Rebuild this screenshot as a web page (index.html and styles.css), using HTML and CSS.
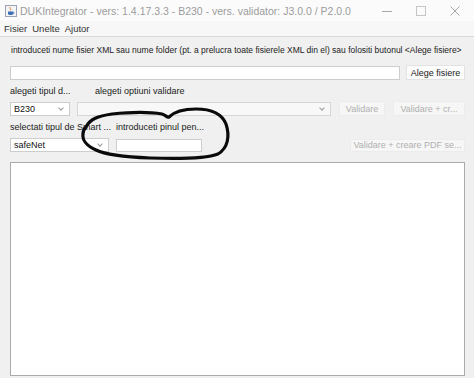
FILE: index.html
```html
<!DOCTYPE html>
<html lang="ro">
<head>
<meta charset="UTF-8">
<meta name="viewport" content="width=device-width, initial-scale=1.0">
<title>DUKIntegrator</title>
<link rel="stylesheet" href="styles.css">
</head>
<body>
  <div class="window">
    <!-- bara de titlu -->
    <div class="titlebar">
      <svg class="app-icon" width="12" height="12" viewBox="0 0 12 12">
        <rect x="0.5" y="0.5" width="11" height="11" fill="#f4f4f4" stroke="#9aa4b4"/>
        <path d="M5 2 C4 3.5 6.5 4 5.5 5.5" stroke="#e07a2a" fill="none" stroke-width="0.9"/>
        <path d="M3 6.5 H8 V8.5 C8 9.5 7 10 5.5 10 C4 10 3 9.5 3 8.5 Z" fill="#3b6fb6"/>
        <path d="M8 7 C9.5 7 9.5 9 8 9" stroke="#3b6fb6" fill="none" stroke-width="0.8"/>
      </svg>
      <span class="title">DUKIntegrator - vers: 1.4.17.3.3 - B230 - vers. validator: J3.0.0 / P2.0.0</span>
      <div class="win-controls">
        <svg class="ctl ctl-min" width="12" height="12" viewBox="0 0 12 12"><line x1="1" y1="6.5" x2="11" y2="6.5" stroke="#a8a8a8"/></svg>
        <svg class="ctl ctl-max" width="12" height="12" viewBox="0 0 12 12"><rect x="1.5" y="1.5" width="9" height="9" fill="none" stroke="#c4c4c4"/></svg>
        <svg class="ctl ctl-close" width="12" height="12" viewBox="0 0 12 12"><path d="M1.5 1.5 L10.5 10.5 M10.5 1.5 L1.5 10.5" stroke="#a8a8a8"/></svg>
      </div>
    </div>

    <!-- meniu -->
    <div class="menubar">
      <span class="menu-item">Fisier</span>
      <span class="menu-item">Unelte</span>
      <span class="menu-item">Ajutor</span>
    </div>

    <div class="content">
      <div class="label label-main">introduceti nume fisier XML sau nume folder (pt. a prelucra toate fisierele XML din el) sau folositi butonul &lt;Alege fisiere&gt;</div>

      <div class="row row-file">
        <div class="field field-path"></div>
        <div class="btn btn-choose">Alege fisiere</div>
      </div>

      <div class="row row-labels">
        <div class="label label-type">alegeti tipul d...</div>
        <div class="label label-options">alegeti optiuni validare</div>
      </div>

      <div class="row row-validate">
        <div class="combo combo-type">B230<span class="arrow"></span></div>
        <div class="combo combo-options disabled"><span class="arrow"></span></div>
        <div class="btn disabled btn-validate">Validare</div>
        <div class="btn disabled btn-validate-pdf">Validare + cr...</div>
      </div>

      <div class="row row-labels">
        <div class="label label-card">selectati tipul de Smart ...</div>
        <div class="label label-pin">introduceti pinul pen...</div>
      </div>

      <div class="row row-sign">
        <div class="combo combo-card">safeNet<span class="arrow"></span></div>
        <div class="field field-pin"></div>
        <div class="btn disabled btn-sign">Validare + creare PDF se...</div>
      </div>

      <div class="output"></div>
    </div>

    <!-- cerc desenat de mana peste formular -->
    <svg class="scribble" width="474" height="378" viewBox="0 0 474 378">
      <path d="M86 127 C90 119 98 116 112 114 C132 112 150 112 162 114 C166 115 167 118 169 117 C173 113 180 109 196 109 C212 109 222 114 226 124 C230 136 228 148 218 154 C205 159 180 159 150 158 C125 157 106 155 96 150 C87 146 82 140 83 134 C83 131 84 129 86 127"
            fill="none" stroke="#0a0a0a" stroke-width="3.2" stroke-linecap="round" stroke-linejoin="round"/>
    </svg>
  </div>
</body>
</html>
```

FILE: styles.css
```css
body {
  margin: 0;
  font-family: "Liberation Sans", Arial, sans-serif;
}

.window {
  position: relative;
  width: 474px;
  height: 378px;
  background: #f0f0f0;
  overflow: hidden;
}

.titlebar {
  display: flex;
  align-items: center;
  height: 21px;
  background: #fbfbfb;
  padding-left: 5px;
}

.app-icon {
  flex: none;
}

.title {
  margin-left: 3px;
  font-size: 10.5px;
  color: #9c9c9c;
  white-space: nowrap;
}

.win-controls {
  display: flex;
  align-items: center;
  margin-left: auto;
  gap: 22px;
  padding-right: 13px;
}

.menubar {
  display: flex;
  align-items: center;
  gap: 5px;
  height: 15px;
  padding-left: 4px;
  background: #f7f7f7;
  border-bottom: 1px solid #d9d9d9;
  font-size: 9.5px;
  color: #333;
}

.content {
  display: flex;
  flex-direction: column;
  height: 341px;
  padding: 7px 9px 0 10px;
  border-left: 2px solid #d2d2d2;
  margin-left: -2px;
  box-sizing: border-box;
}

.label {
  font-size: 9px;
  line-height: 12px;
  color: #222;
  white-space: nowrap;
}

.label-main {
  font-size: 8.5px;
  padding-left: 1px;
}

.row {
  display: flex;
  align-items: center;
}

.row-file {
  margin-top: 9px;
  gap: 6px;
}

.row-labels {
  margin-top: 5px;
}

.row-validate {
  margin-top: 4px;
}

.row-sign {
  margin-top: 5px;
}

.field {
  height: 14px;
  background: #fff;
  border: 1px solid #cdcdcd;
  box-sizing: border-box;
}

.field-path {
  flex: 1;
}

.btn {
  display: flex;
  align-items: center;
  justify-content: center;
  height: 15px;
  font-size: 9px;
  color: #1a1a1a;
  background: #fcfcfc;
  border: 1px solid #e2e2e2;
  box-sizing: border-box;
  white-space: nowrap;
}

.btn.disabled {
  color: #b0b0b0;
  background: #f6f6f6;
  border-color: #ececec;
}

.btn-choose {
  width: 59px;
}

.combo {
  position: relative;
  display: flex;
  align-items: center;
  height: 14px;
  padding-left: 3px;
  font-size: 9px;
  color: #111;
  background: #fff;
  border: 1px solid #cdcdcd;
  box-sizing: border-box;
}

.combo.disabled {
  background: #f8f8f8;
  border-color: #d6d6d6;
}

.arrow {
  position: absolute;
  right: 6px;
  top: 3px;
  width: 3px;
  height: 3px;
  border-right: 1px solid #9a9a9a;
  border-bottom: 1px solid #9a9a9a;
  transform: rotate(45deg);
}

.label-type {
  width: 85px;
}

.combo-type {
  width: 60px;
}

.combo-options {
  width: 254px;
  margin-left: 7px;
}

.btn-validate {
  width: 46px;
  margin-left: 8px;
}

.btn-validate-pdf {
  width: 72px;
  margin-left: 8px;
}

.label-card {
  width: 106px;
}

.combo-card {
  width: 99px;
}

.field-pin {
  width: 86px;
  height: 13px;
  margin-left: 7px;
}

.btn-sign {
  width: 115px;
  height: 13px;
  margin-left: auto;
}

.output {
  margin-top: 10px;
  height: 214px;
  background: #fff;
  border: 1px solid #ababab;
  box-sizing: border-box;
}

.scribble {
  position: absolute;
  left: 0;
  top: 0;
  pointer-events: none;
}
```
